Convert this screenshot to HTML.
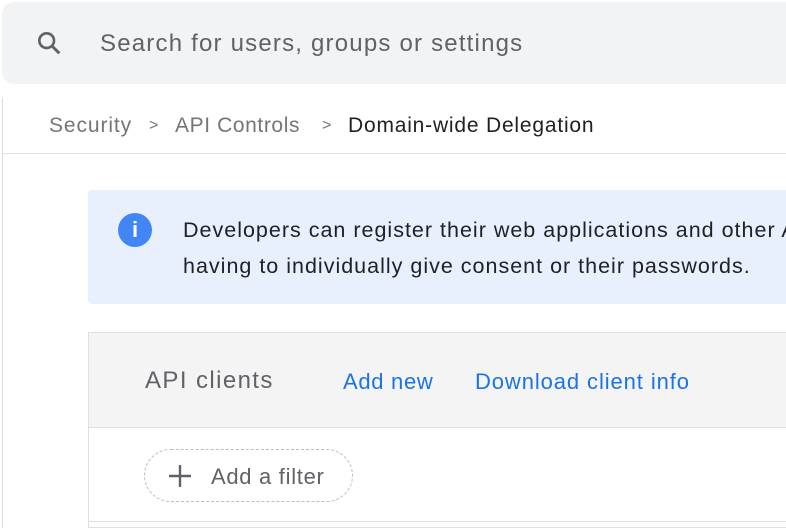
<!DOCTYPE html>
<html><head><style>
*{margin:0;padding:0;box-sizing:border-box}
html,body{width:786px;height:528px;overflow:hidden}
body{background:#fff;font-family:"Liberation Sans",Arial,sans-serif;position:relative}
.a{position:absolute;white-space:nowrap}
</style></head><body>
<div class="a" style="left:2px;top:2px;width:784px;height:82px;background:#f1f3f4;border-radius:12px 0 0 12px"></div>
<svg class="a" style="left:34px;top:28px" width="32" height="32" viewBox="0 0 24 24"><circle cx="9.5" cy="9.5" r="5.5" fill="none" stroke="#5f6368" stroke-width="2"/><path d="M13.5 13.5L19 19" stroke="#5f6368" stroke-width="2.2"/></svg>
<div class="a" style="left:100px;top:30px;font-size:24px;letter-spacing:1.2px;color:#5f6368">Search for users, groups or settings</div>
<div class="a" style="left:2px;top:98px;width:1px;height:430px;background:#dadce0"></div>
<div class="a" style="left:2px;top:153px;width:784px;height:1px;background:#e0e0e0"></div>
<div class="a" style="left:49px;top:114px;font-size:21px;letter-spacing:0.9px;color:#757575">Security</div>
<div class="a" style="left:149px;top:117px;font-size:16px;color:#757575">&gt;</div>
<div class="a" style="left:175px;top:114px;font-size:21px;letter-spacing:0.6px;color:#757575">API Controls</div>
<div class="a" style="left:322px;top:117px;font-size:16px;color:#757575">&gt;</div>
<div class="a" style="left:348px;top:114px;font-size:21px;letter-spacing:0.8px;color:#202124">Domain-wide Delegation</div>
<div class="a" style="left:88px;top:190px;width:698px;height:114px;background:#e8f0fe;border-radius:4px 0 0 4px;overflow:hidden">
<div class="a" style="left:30px;top:23px;width:34px;height:34px;border-radius:50%;background:#4285f4;color:#fff;font-weight:bold;font-size:22px;text-align:center;line-height:34px">i</div>
<div class="a" style="left:95px;top:22px;font-size:21.5px;letter-spacing:1px;color:#202124;line-height:36px">Developers can register their web applications and other API clients<br>having to individually give consent or their passwords.</div>
</div>
<div class="a" style="left:88px;top:332px;width:698px;height:196px;border:1px solid #e0e0e0;border-right:none;overflow:hidden">
<div class="a" style="left:0;top:0;width:698px;height:95px;background:#f4f4f4;border-bottom:1px solid #e0e0e0"></div>
<div class="a" style="left:56px;top:34px;font-size:24px;letter-spacing:1.4px;color:#5f6368">API clients</div>
<div class="a" style="left:254px;top:36px;font-size:22px;letter-spacing:0.7px;color:#1a73e8">Add new</div>
<div class="a" style="left:386px;top:36px;font-size:22px;letter-spacing:0.9px;color:#1a73e8">Download client info</div>
<div class="a" style="left:55px;top:116px;width:209px;height:53px;border:1.5px dashed #bdbdbd;border-radius:27px"></div>
<svg class="a" style="left:78px;top:130px" width="26" height="26" viewBox="0 0 26 26"><path d="M13 2V24M2 13H24" stroke="#5f6368" stroke-width="2.4"/></svg>
<div class="a" style="left:122px;top:131px;font-size:22px;letter-spacing:0.7px;color:#5f6368">Add a filter</div>
<div class="a" style="left:0;top:188px;width:698px;height:1px;background:#e0e0e0"></div>
</div>
</body></html>
